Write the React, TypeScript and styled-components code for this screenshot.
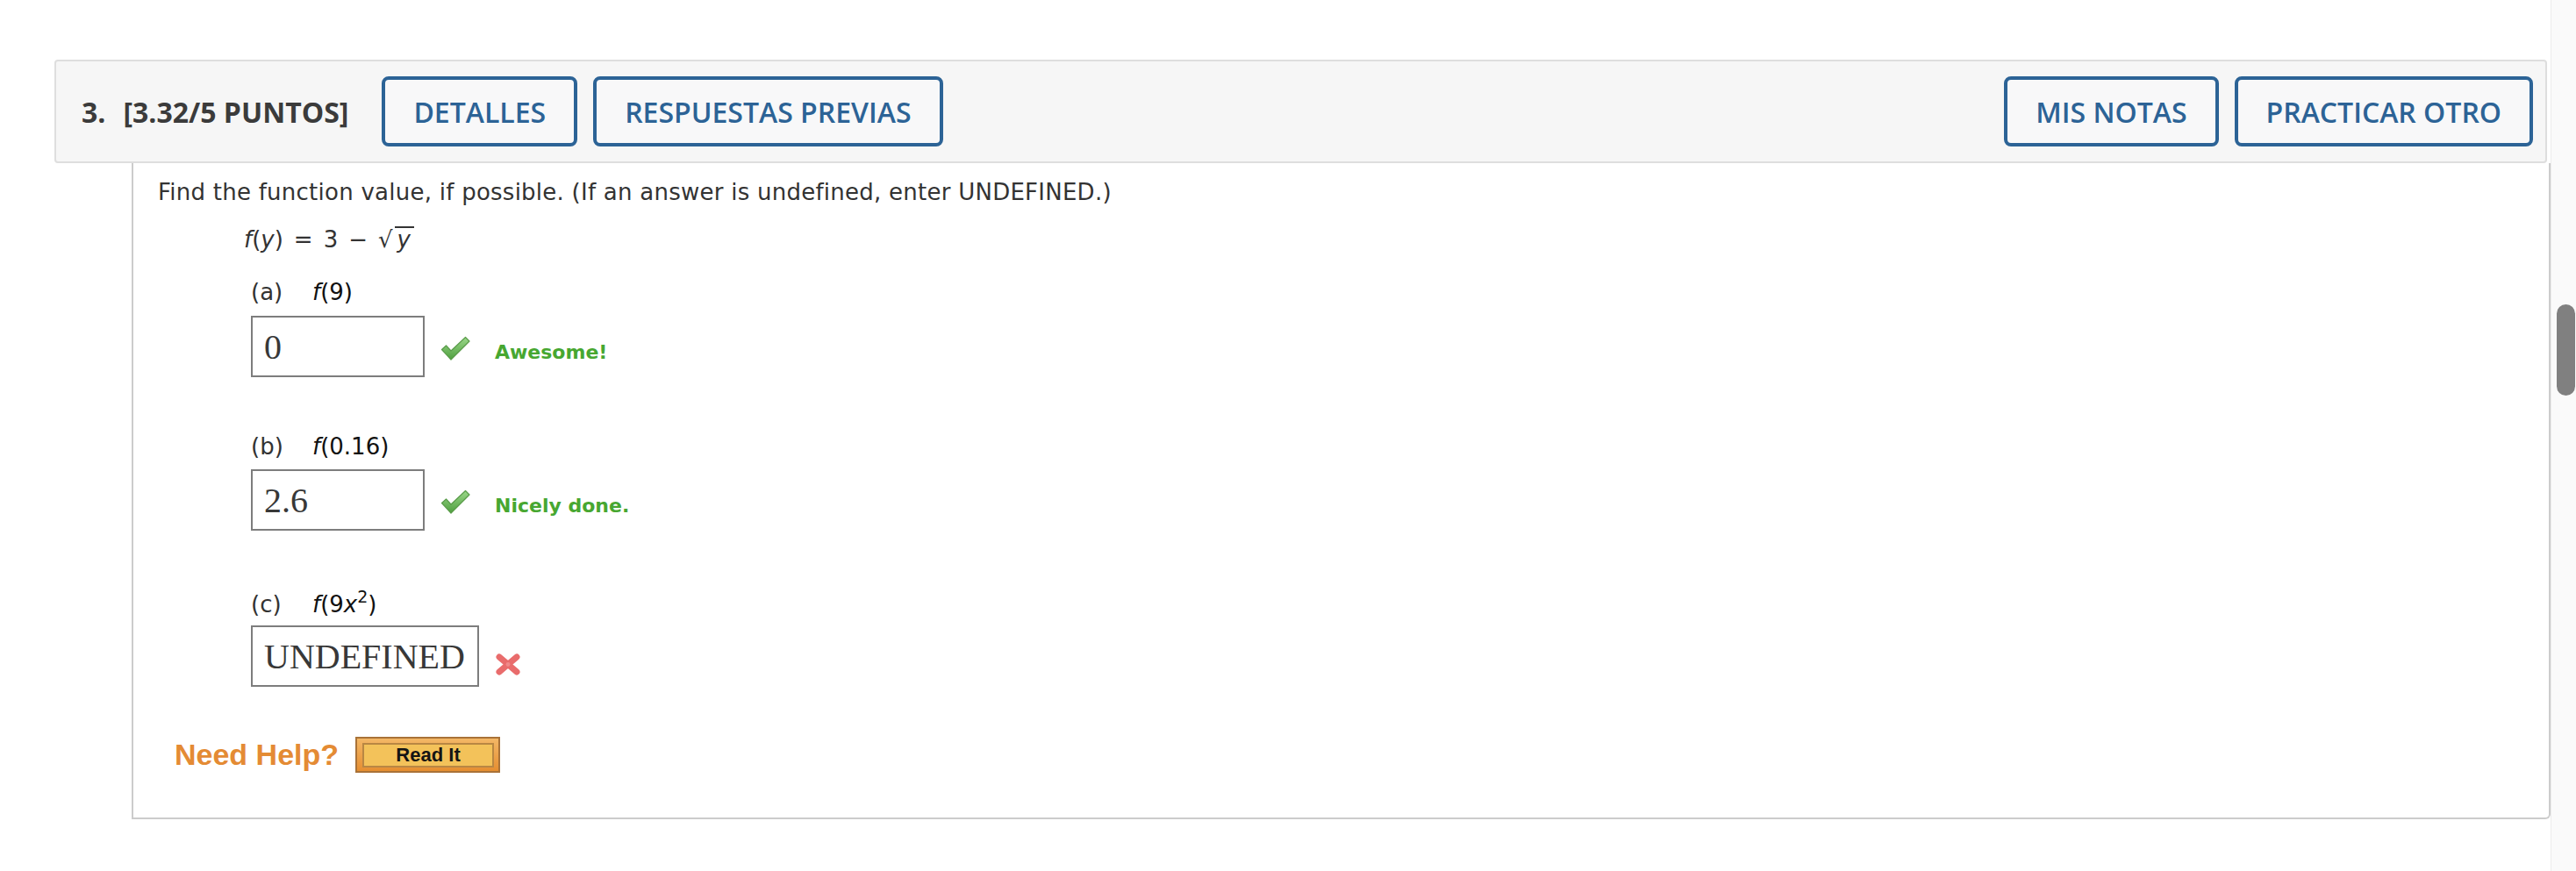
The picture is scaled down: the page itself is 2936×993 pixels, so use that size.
import React from "react";
import styled, { createGlobalStyle } from "styled-components";

const GlobalStyle = createGlobalStyle`
  html, body { margin: 0; padding: 0; background: #ffffff; overflow: hidden; }
  * { box-sizing: border-box; }
`;

const Page = styled.div`
  display: flex;
  width: 2936px;
  height: 993px;
  background: #ffffff;
`;

const Main = styled.div`
  flex: 1;
  padding-top: 68px;
  min-width: 0;
`;

const ScrollTrack = styled.div`
  width: 29px;
  height: 100%;
  background: #fafafa;
  border-left: 1px solid #ececec;
  padding: 347px 1px 0 6px;
`;

const Thumb = styled.div`
  width: 21px;
  height: 104px;
  border-radius: 11px;
  background: #808080;
`;

const Header = styled.div`
  display: flex;
  align-items: center;
  height: 118px;
  margin: 0 4px 0 62px;
  padding: 0 14px 0 29px;
  background: #f6f6f6;
  border: 2px solid #dedede;
  border-radius: 4px;
  font-family: "Open Sans", "DejaVu Sans", sans-serif;
`;

const Title = styled.div`
  display: flex;
  align-items: center;
  font-size: 32px;
  font-weight: 700;
  color: #3b3b3b;
  margin-right: 38px;
  white-space: nowrap;
`;

const Number = styled.span`
  margin-right: 20px;
`;

const ButtonGroup = styled.div`
  display: flex;
  gap: 18px;
`;

const Spacer = styled.div`
  flex: 1;
`;

const HeaderButton = styled.button`
  height: 80px;
  padding: 0 32px;
  border: 4px solid #2c6396;
  border-radius: 8px;
  background: #f8f8f9;
  color: #2c6396;
  font-family: "Open Sans", "DejaVu Sans", sans-serif;
  font-size: 32px;
  font-weight: 600;
  white-space: nowrap;
  cursor: pointer;
`;

const ContentBox = styled.div`
  height: 748px;
  margin-left: 150px;
  padding: 18px 0 0 28px;
  border-left: 2px solid #cccccc;
  border-right: 2px solid #cccccc;
  border-bottom: 2px solid #cccccc;
  border-bottom-right-radius: 6px;
  font-family: "DejaVu Sans", Verdana, sans-serif;
  font-size: 26px;
  color: #333333;
`;

const Prompt = styled.div`
  line-height: 30px;
  height: 30px;
  letter-spacing: 0.25px;
  white-space: nowrap;
`;

const Equation = styled.div`
  margin: 24px 0 0 98px;
  line-height: 30px;
  height: 30px;
  white-space: nowrap;
`;

const Ital = styled.i`
  font-style: italic;
`;

const Op = styled.span`
  margin: 0 12px;
`;

const Radicand = styled.span`
  display: inline-block;
  border-top: 2px solid #333;
  line-height: 26px;
  padding: 0 4px 0 3px;
  margin-left: 2px;
`;

const Part = styled.div<{ $top: number }>`
  margin: ${(p) => p.$top}px 0 0 106px;
`;

const LabelRow = styled.div`
  display: flex;
  align-items: center;
  height: 30px;
  line-height: 30px;
  white-space: nowrap;
`;

const PartLetter = styled.span`
  width: 70px;
`;

const MathExpr = styled.span`
  color: #111111;
  sup {
    font-size: 19px;
    line-height: 0;
    vertical-align: 11px;
  }
`;

const AnswerRow = styled.div<{ $gap: number }>`
  display: flex;
  align-items: center;
  margin-top: ${(p) => p.$gap}px;
`;

const AnswerBox = styled.div`
  display: flex;
  align-items: center;
  height: 70px;
  min-width: 198px;
  padding: 0 14px 0 13px;
  border: 2px solid #7d7d7d;
  background: #ffffff;
  font-family: "Liberation Serif", "DejaVu Serif", serif;
  font-size: 40px;
  color: #383838;
  white-space: nowrap;
`;

const IconWrap = styled.span<{ $shift: number }>`
  display: flex;
  margin-left: 18px;
  margin-top: ${(p) => p.$shift}px;
`;

const Feedback = styled.span`
  margin-left: 28px;
  margin-top: 12px;
  font-family: "DejaVu Sans", Verdana, sans-serif;
  font-weight: 700;
  font-size: 22px;
  color: #47a731;
  white-space: nowrap;
`;

const HelpRow = styled.div`
  display: flex;
  align-items: center;
  margin: 57px 0 0 19px;
`;

const NeedHelp = styled.span`
  font-family: "Liberation Sans", Arial, sans-serif;
  font-weight: 700;
  font-size: 34px;
  color: #e48b34;
  margin-right: 19px;
  white-space: nowrap;
`;

const ReadItOuter = styled.button`
  width: 165px;
  height: 41px;
  padding: 5px 5px 4px 6px;
  border: 2px solid #a97238;
  background: linear-gradient(#f3b766, #e58e31);
  cursor: pointer;
`;

const ReadItInner = styled.span`
  display: flex;
  align-items: center;
  justify-content: center;
  width: 100%;
  height: 100%;
  border: 2px solid #b98743;
  background: #f3c25a;
  font-family: "Liberation Sans", Arial, sans-serif;
  font-weight: 700;
  font-size: 22px;
  color: #141414;
`;

const CheckIcon = () => (
  <svg width="34" height="28" viewBox="0 0 34 28">
    <defs>
      <linearGradient id="chk" x1="0" y1="0" x2="0" y2="1">
        <stop offset="0" stopColor="#9bd88a" />
        <stop offset="1" stopColor="#4f9f3f" />
      </linearGradient>
    </defs>
    <path
      d="M1.5 15.5 L6.5 11 L12 17 L28.5 1.5 L33 6 L12 27 Z"
      fill="url(#chk)"
      stroke="#5a9c4a"
      strokeWidth="1.2"
      strokeLinejoin="round"
    />
  </svg>
);

const CrossIcon = () => (
  <svg width="30" height="27" viewBox="0 0 30 27">
    <g stroke="#e96c6c" strokeWidth="7" strokeLinecap="round">
      <line x1="5" y1="5" x2="25" y2="22" />
      <line x1="25" y1="5" x2="5" y2="22" />
    </g>
    <circle cx="15" cy="13.5" r="2.4" fill="#f08a8a" />
  </svg>
);

export default function App() {
  return (
    <>
      <GlobalStyle />
      <Page>
        <Main>
          <Header>
            <Title>
              <Number>3.</Number>
              <span>[3.32/5 PUNTOS]</span>
            </Title>
            <ButtonGroup>
              <HeaderButton>DETALLES</HeaderButton>
              <HeaderButton>RESPUESTAS PREVIAS</HeaderButton>
            </ButtonGroup>
            <Spacer />
            <ButtonGroup>
              <HeaderButton>MIS NOTAS</HeaderButton>
              <HeaderButton>PRACTICAR OTRO</HeaderButton>
            </ButtonGroup>
          </Header>
          <ContentBox>
            <Prompt>
              Find the function value, if possible. (If an answer is undefined, enter UNDEFINED.)
            </Prompt>
            <Equation>
              <Ital>f</Ital>(<Ital>y</Ital>)<Op>=</Op>3<Op>−</Op>√<Radicand><Ital>y</Ital></Radicand>
            </Equation>

            <Part $top={30}>
              <LabelRow>
                <PartLetter>(a)</PartLetter>
                <MathExpr>
                  <Ital>f</Ital>(9)
                </MathExpr>
              </LabelRow>
              <AnswerRow $gap={12}>
                <AnswerBox>0</AnswerBox>
                <IconWrap $shift={4}>
                  <CheckIcon />
                </IconWrap>
                <Feedback>Awesome!</Feedback>
              </AnswerRow>
            </Part>

            <Part $top={64}>
              <LabelRow>
                <PartLetter>(b)</PartLetter>
                <MathExpr>
                  <Ital>f</Ital>(0.16)
                </MathExpr>
              </LabelRow>
              <AnswerRow $gap={11}>
                <AnswerBox>2.6</AnswerBox>
                <IconWrap $shift={4}>
                  <CheckIcon />
                </IconWrap>
                <Feedback>Nicely done.</Feedback>
              </AnswerRow>
            </Part>

            <Part $top={69}>
              <LabelRow>
                <PartLetter>(c)</PartLetter>
                <MathExpr>
                  <Ital>f</Ital>(9<Ital>x</Ital><sup>2</sup>)
                </MathExpr>
              </LabelRow>
              <AnswerRow $gap={9}>
                <AnswerBox>UNDEFINED</AnswerBox>
                <IconWrap $shift={19}>
                  <CrossIcon />
                </IconWrap>
              </AnswerRow>
            </Part>

            <HelpRow>
              <NeedHelp>Need Help?</NeedHelp>
              <ReadItOuter>
                <ReadItInner>Read It</ReadItInner>
              </ReadItOuter>
            </HelpRow>
          </ContentBox>
        </Main>
        <ScrollTrack>
          <Thumb />
        </ScrollTrack>
      </Page>
    </>
  );
}
